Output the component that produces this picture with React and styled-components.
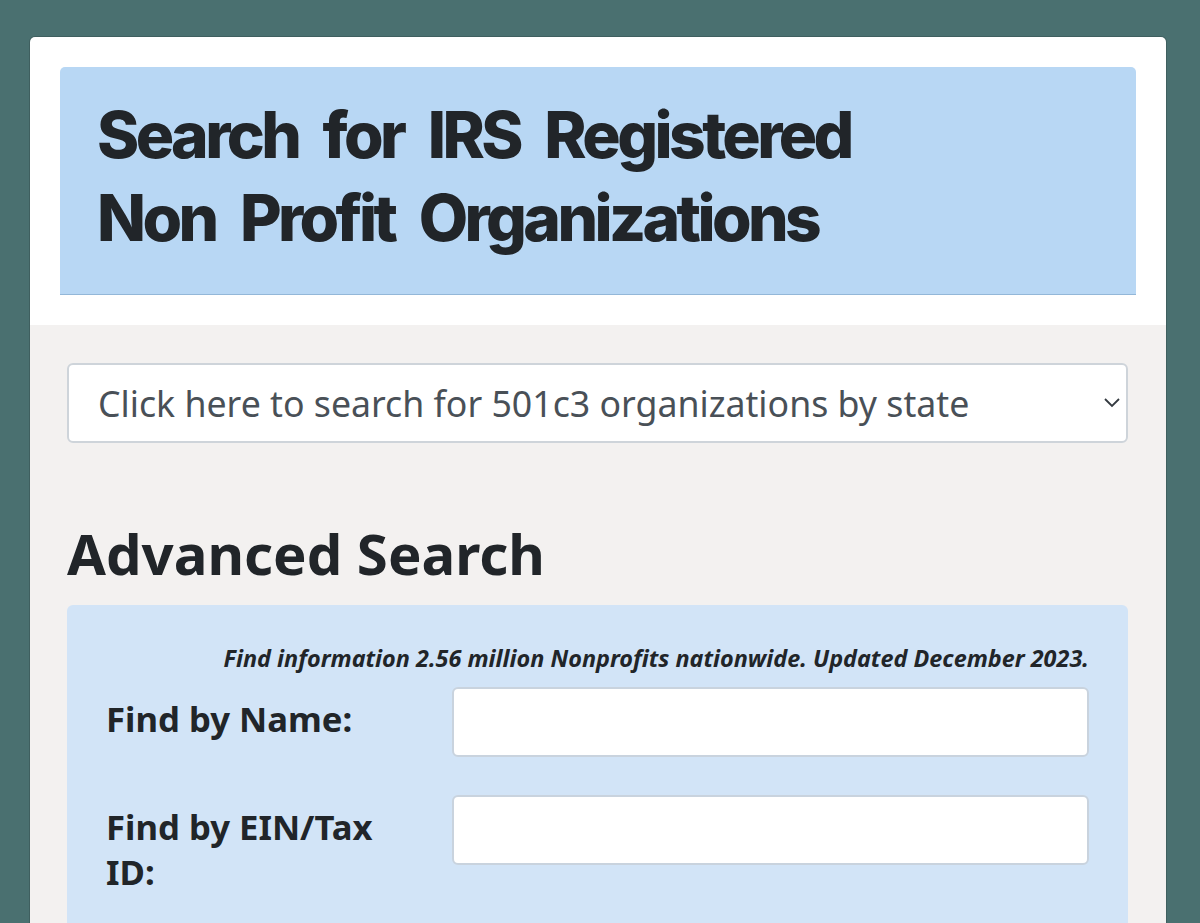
import React from "react";
import styled, { createGlobalStyle } from "styled-components";

const Global = createGlobalStyle`
  html, body { margin: 0; height: 923px; overflow: hidden; background: #4a7070; }
  * { box-sizing: border-box; }
  body { font-family: "Noto Sans", "Open Sans", sans-serif; color: #212529; }
`;
const Page = styled.div`
  height: 923px;
  overflow: hidden;
  padding: 37px 34px 0 30px;
`;
const Card = styled.main`
  background: #fff;
  border-radius: 5px 5px 0 0;
  box-shadow: 0 0 0 1px rgba(0, 0, 0, 0.15);
  min-height: 886px;
`;
const HeaderWrap = styled.header`
  padding: 30px 30px;
`;
const Banner = styled.div`
  height: 228px;
  background: #b8d7f4;
  border-radius: 5px 5px 0 0;
  border-bottom: 1px solid #93b7d8;
  padding: 26px 37px;
`;
const Title = styled.h1`
  margin: 0;
  font-family: "Inter", sans-serif;
  font-weight: 800;
  font-size: 64px;
  line-height: 83px;
  letter-spacing: -3.6px;
  word-spacing: 14px;
  color: #212529;
`;
const Body = styled.div`
  background: #f3f1f0;
  padding: 38px 38px 0 37px;
`;
const SelectBox = styled.div`
  height: 80px;
  background: #fff;
  border: 2px solid #ced4da;
  border-radius: 6px;
  display: flex;
  align-items: center;
  justify-content: space-between;
  padding: 0 5px 0 29px;
  font-size: 35.7px;
  color: #495057;
`;
const Heading = styled.h2`
  margin: 76px 0 18px;
  font-size: 56.3px;
  line-height: 68px;
  font-weight: 700;
  color: #212529;
`;
const Panel = styled.section`
  background: #d2e4f7;
  border-radius: 6px 6px 0 0;
  padding: 38px 39px 40px 39px;
  height: 400px;
`;
const Note = styled.p`
  margin: 0 0 14px;
  text-align: right;
  font-size: 23.4px;
  line-height: 30px;
  font-weight: 700;
  font-style: italic;
`;
const Row = styled.div`
  display: grid;
  grid-template-columns: 346px 1fr;
  margin-bottom: 38px;
`;
const Label = styled.label`
  font-size: 34.7px;
  line-height: 45px;
  font-weight: 700;
  padding-top: 9px;
  max-width: 300px;
`;
const Input = styled.input`
  height: 70px;
  width: 100%;
  background: #fff;
  border: 2px solid #c9d3de;
  border-radius: 6px;
`;

export default function App() {
  return (
    <Page>
      <Global />
      <Card>
        <HeaderWrap>
          <Banner>
            <Title>
              Search for IRS Registered
              <br />
              Non Profit Organizations
            </Title>
          </Banner>
        </HeaderWrap>
        <Body>
          <SelectBox>
            <span>Click here to search for 501c3 organizations by state</span>
            <svg width="18" height="16" viewBox="0 0 18 16" fill="none">
              <path d="M2 4l7 7 7-7" stroke="#343a40" strokeWidth="1.8" />
            </svg>
          </SelectBox>
          <Heading>Advanced Search</Heading>
          <Panel>
            <Note>Find information 2.56 million Nonprofits nationwide. Updated December 2023.</Note>
            <Row>
              <Label>Find by Name:</Label>
              <Input />
            </Row>
            <Row>
              <Label>Find by EIN/Tax ID:</Label>
              <Input />
            </Row>
          </Panel>
        </Body>
      </Card>
    </Page>
  );
}
